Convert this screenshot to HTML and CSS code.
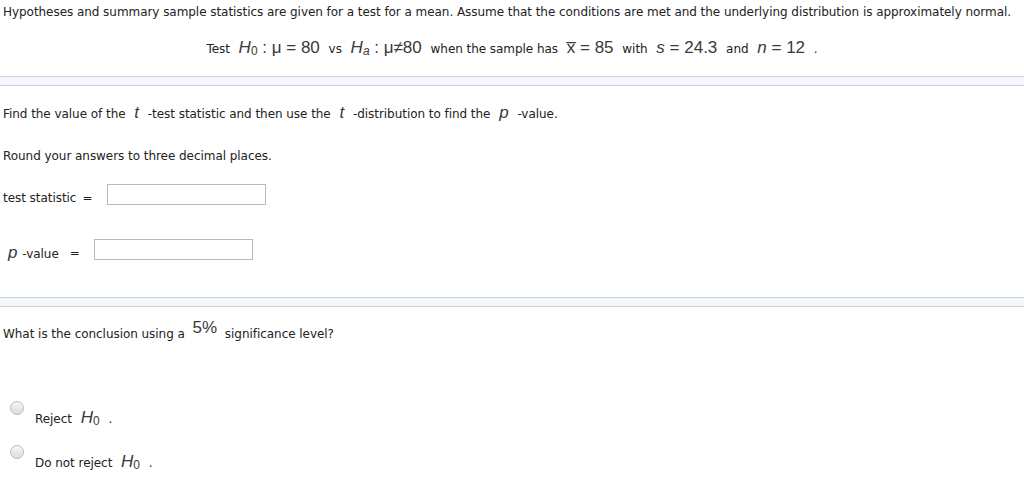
FILE: index.html
```html
<!DOCTYPE html>
<html>
<head>
<meta charset="utf-8">
<link rel="stylesheet" href="styles.css">
</head>
<body>
<div class="page">
  <p class="intro">Hypotheses and summary sample statistics are given for a test for a mean. Assume that the conditions are met and the underlying distribution is approximately normal.</p>
  <p class="hyp">Test <span class="m"><i>H</i><sub>0</sub> : μ = 80</span> vs <span class="m"><i>H</i><sub><i>a</i></sub> : μ≠80</span> when the sample has <span class="m">x̅ = 85</span> with <span class="m"><i>s</i> = 24.3</span> and <span class="m"><i>n</i> = 12</span> .</p>
  <div class="band band1"></div>
  <p class="find">Find the value of the <span class="m"><i>t</i></span> -test statistic and then use the <span class="m"><i>t</i></span> -distribution to find the <span class="m"><i>p</i></span> -value.</p>
  <p class="round">Round your answers to three decimal places.</p>
  <div class="row row-ts"><span class="txt">test statistic</span><span class="txt eq">=</span><span class="box"></span></div>
  <div class="row row-p"><span class="txt"><span class="m pm"><i>p</i></span> -value</span><span class="txt eq">=</span><span class="box"></span></div>
  <div class="band band2"></div>
  <p class="concl">What is the conclusion using a <span class="m pct">5%</span> significance level?</p>
  <div class="opt opt1"><span class="radio"></span><span class="lbl">Reject <span class="m"><i>H</i><sub>0</sub></span> .</span></div>
  <div class="opt opt2"><span class="radio"></span><span class="lbl">Do not reject <span class="m"><i>H</i><sub>0</sub></span> .</span></div>
</div>
</body>
</html>
```

FILE: styles.css
```css
html, body { margin: 0; padding: 0; background: #fff; }
body {
  font-family: "DejaVu Sans", sans-serif;
  font-size: 12px;
  letter-spacing: -0.05px;
  color: #222;
}
.page { width: 1024px; }
p { margin: 0; }
.intro { padding: 5px 0 0 3px; line-height: 14px; white-space: nowrap; }
.hyp { text-align: center; margin-top: 19px; line-height: 20px; white-space: nowrap; }
.m {
  font-family: "Liberation Sans", sans-serif;
  font-size: 17px;
  letter-spacing: 0;
  color: #3a3a3a;
  margin: 0 5px;
}
.m i { font-style: italic; }
.m sub { font-size: 12px; vertical-align: -2px; }
.band {
  height: 8px;
  background: #f4f7fa;
  border-top: 1px solid #c9d2de;
  border-bottom: 1px solid #c9d2de;
}
.band1 { margin-top: 15px; }
.find { padding-left: 3px; margin-top: 17px; line-height: 20px; }
.round { padding-left: 3px; margin-top: 25px; line-height: 14px; }
.row { display: flex; align-items: flex-start; padding-left: 3px; }
.txt { padding-top: 7px; line-height: 14px; white-space: nowrap; }
.row-ts { margin-top: 21px; }
.row-p { margin-top: 34px; padding-left: 8px; }
.eq { margin: 0 15px 0 6px; }
.row-p .eq { margin: 0 14px 0 11px; }
.pm { margin: 0 1px 0 0; }
.box {
  display: inline-block;
  width: 157px;
  height: 19px;
  border: 1px solid #b9b9b9;
  background: #fff;
}
.band2 { margin-top: 36px; }
.concl { padding-left: 3px; margin-top: 15px; line-height: 22px; }
.pct { position: relative; top: -5px; margin: 0 4px; }
.opt { position: relative; padding-left: 35px; height: 24px; }
.opt1 { margin-top: 61px; }
.opt2 { margin-top: 20px; }
.radio {
  position: absolute;
  left: 10px;
  top: -5px;
  width: 12px;
  height: 12px;
  border-radius: 50%;
  border: 1px solid #bcbcbc;
  background: linear-gradient(#f6f6f6, #dcdcdc);
}
.lbl { line-height: 24px; white-space: nowrap; }
```
